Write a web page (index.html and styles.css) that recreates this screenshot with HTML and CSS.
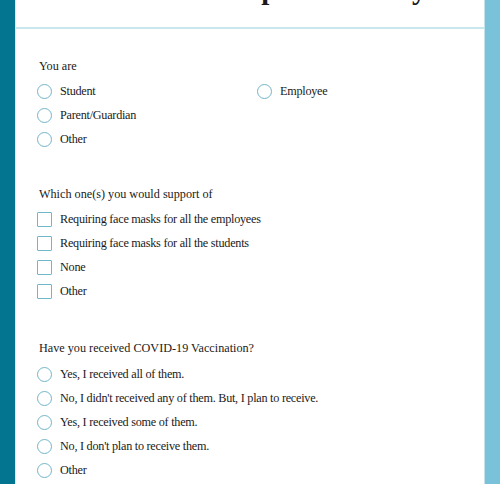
FILE: index.html
```html
<!DOCTYPE html>
<html>
<head>
<meta charset="utf-8">
<link rel="stylesheet" href="styles.css">
</head>
<body>
<div class="page">
  <div class="bar-left"></div>
  <main class="card">
    <header class="head">
      <h1 class="title">COVID-19 Response Survey</h1>
    </header>
    <section class="question q1">
      <div class="q-label">You are</div>
      <div class="options two-col">
        <label class="opt"><span class="radio"></span>Student</label>
        <label class="opt"><span class="radio"></span>Employee</label>
        <label class="opt"><span class="radio"></span>Parent/Guardian</label>
        <span></span>
        <label class="opt"><span class="radio"></span>Other</label>
      </div>
    </section>
    <section class="question q2">
      <div class="q-label">Which one(s) you would support of</div>
      <div class="options">
        <label class="opt"><span class="check"></span>Requiring face masks for all the employees</label>
        <label class="opt"><span class="check"></span>Requiring face masks for all the students</label>
        <label class="opt"><span class="check"></span>None</label>
        <label class="opt"><span class="check"></span>Other</label>
      </div>
    </section>
    <section class="question q3">
      <div class="q-label">Have you received COVID-19 Vaccination?</div>
      <div class="options">
        <label class="opt"><span class="radio"></span>Yes, I received all of them.</label>
        <label class="opt"><span class="radio"></span>No, I didn't received any of them. But, I plan to receive.</label>
        <label class="opt"><span class="radio"></span>Yes, I received some of them.</label>
        <label class="opt"><span class="radio"></span>No, I don't plan to receive them.</label>
        <label class="opt"><span class="radio"></span>Other</label>
      </div>
    </section>
  </main>
  <div class="bar-right"></div>
</div>
</body>
</html>
```
FILE: styles.css
```css
html, body {
  margin: 0;
  padding: 0;
  background: #ffffff;
}
body {
  font-family: "Liberation Serif", Tinos, Times, serif;
  color: #1a1a1a;
  font-size: 12.2px;
}
.page {
  display: flex;
  height: 484px;
  overflow: hidden;
}
.bar-left {
  width: 15px;
  flex: none;
  background: #037591;
}
.bar-right {
  width: 15px;
  flex: none;
  background: #79c2d9;
}
.card {
  flex: 1;
  background: #ffffff;
  border-left: 1px solid #d3ebf2;
  border-right: 1px solid #c3e2ec;
  overflow: hidden;
}
.head {
  height: 27px;
  border-bottom: 2px solid #c8e8f0;
  display: flex;
  align-items: flex-end;
  justify-content: center;
  overflow: hidden;
}
.title {
  margin: 0 0 23px 0;
  font-size: 29px;
  line-height: 1;
  font-weight: bold;
  white-space: nowrap;
}
.question {
  padding-left: 21px;
}
.q1 { padding-top: 29px; }
.q2 { padding-top: 39px; }
.q3 { padding-top: 41px; }
.q-label {
  padding-left: 2px;
  line-height: 16px;
  margin-bottom: 9px;
}
.q3 .q-label { margin-bottom: 10px; }
.options {
  display: flex;
  flex-direction: column;
  gap: 8px;
}
.two-col {
  display: grid;
  grid-template-columns: 212px 1fr;
  row-gap: 8px;
}
.opt {
  display: flex;
  align-items: center;
  height: 16px;
  gap: 8px;
  white-space: nowrap;
  letter-spacing: -0.25px;
}
.radio {
  width: 13px;
  height: 13px;
  border: 1.5px solid #72b6ca;
  border-radius: 50%;
  flex: none;
}
.check {
  width: 13px;
  height: 13px;
  border: 1.5px solid #72b6ca;
  border-radius: 1px;
  flex: none;
}
```
